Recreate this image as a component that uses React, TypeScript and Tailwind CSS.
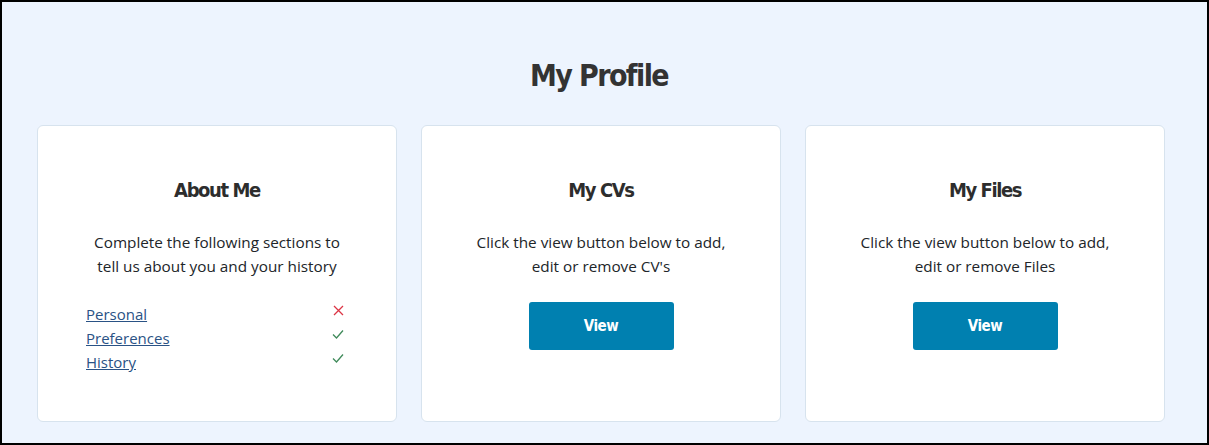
import React from "react";

const headFont = { fontFamily: '"DejaVu Sans Condensed", "DejaVu Sans", sans-serif' };

function Cross() {
  return (
    <svg width="11" height="11" viewBox="0 0 11 11" className="mt-[2px]">
      <path d="M1 1 L10 10 M10 1 L1 10" stroke="#dc3545" strokeWidth="1.3" fill="none" />
    </svg>
  );
}

function Check() {
  return (
    <svg width="12" height="10" viewBox="0 0 12 10" className="mt-[2px]">
      <path d="M1 5.5 L4.5 9 L11 1.5" stroke="#3f8a5a" strokeWidth="1.3" fill="none" />
    </svg>
  );
}

function Card({ title, children }: { title: string; children: React.ReactNode }) {
  return (
    <div className="w-[360px] h-[297px] bg-white border border-[#d7e3ee] rounded-[6px] flex flex-col items-center pt-[50px]">
      <h2 className="text-[20px] leading-[28px] font-bold text-[#2d2d2d] tracking-[-1.4px]" style={headFont}>
        {title}
      </h2>
      {children}
    </div>
  );
}

export default function App() {
  return (
    <div
      className="w-[1209px] h-[445px] bg-[#edf4fe] border-2 border-black flex flex-col items-center"
      style={{ fontFamily: '"Open Sans", "Noto Sans", sans-serif' }}
    >
      <h1 className="mt-[54px] mr-[11px] text-[30px] leading-[40px] font-bold text-[#333333] tracking-[-1.6px]" style={headFont}>
        My Profile
      </h1>
      <div className="mt-[29px] flex gap-[24px] w-full pl-[35px]">
        <Card title="About Me">
          <p className="mt-[26px] text-[15.3px] leading-[24px] text-[#212529] text-center">
            Complete the following sections to
            <br />
            tell us about you and your history
          </p>
          <div className="mt-[24px] w-full px-[48px] flex flex-col">
            {[
              ["Personal", false],
              ["Preferences", true],
              ["History", true],
            ].map(([label, ok]) => (
              <div key={label as string} className="flex justify-between items-start h-[24px]">
                <a href="#" className="text-[15px] leading-[24px] text-[#2a5285] underline">
                  {label as string}
                </a>
                <span className="mr-[4px] mt-[1px]">{ok ? <Check /> : <Cross />}</span>
              </div>
            ))}
          </div>
        </Card>
        <Card title="My CVs">
          <p className="mt-[26px] text-[15.3px] leading-[24px] text-[#212529] text-center">
            Click the view button below to add,
            <br />
            edit or remove CV's
          </p>
          <button
            className="mt-[24px] w-[145px] h-[48px] bg-[#0080b0] rounded-[3px] text-white text-[15px] font-bold tracking-[-0.5px]"
            style={headFont}
          >
            View
          </button>
        </Card>
        <Card title="My Files">
          <p className="mt-[26px] text-[15.3px] leading-[24px] text-[#212529] text-center">
            Click the view button below to add,
            <br />
            edit or remove Files
          </p>
          <button
            className="mt-[24px] w-[145px] h-[48px] bg-[#0080b0] rounded-[3px] text-white text-[15px] font-bold tracking-[-0.5px]"
            style={headFont}
          >
            View
          </button>
        </Card>
      </div>
    </div>
  );
}
